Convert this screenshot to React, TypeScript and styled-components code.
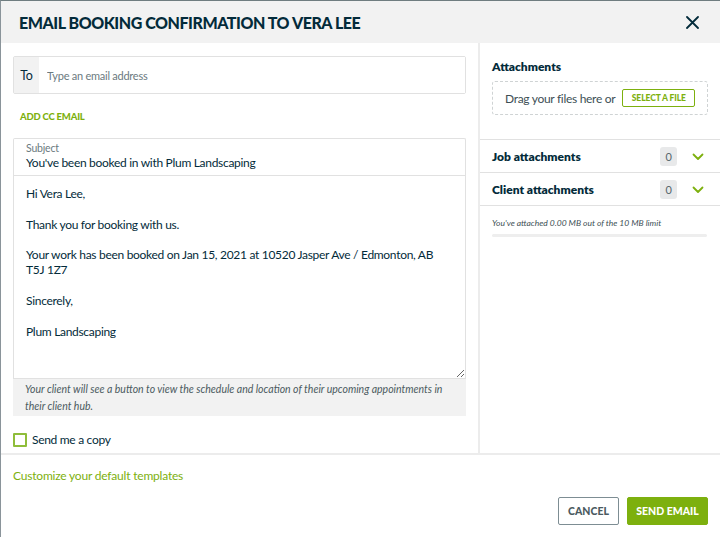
import React from "react";
import styled, { createGlobalStyle } from "styled-components";

const GlobalStyle = createGlobalStyle`
  html, body {
    margin: 0;
    padding: 0;
    background: #ffffff;
  }
  * {
    box-sizing: border-box;
  }
`;

const navy = "#032b3a";
const green = "#7db00e";
const border = "#e1e1e1";
const muted = "#f2f2f2";

const Modal = styled.div`
  width: 720px;
  height: 537px;
  display: flex;
  flex-direction: column;
  border-top: 1px solid #6f7d80;
  border-left: 1px solid #8a949a;
  font-family: Lato, "Open Sans", sans-serif;
  color: ${navy};
  background: #fff;
  overflow: hidden;
`;

const Header = styled.div`
  height: 42px;
  flex-shrink: 0;
  display: flex;
  align-items: center;
  justify-content: space-between;
  padding: 0 20px 0 18px;
  background: ${muted};
`;

const Title = styled.h1`
  margin: 0;
  font-size: 16px;
  font-weight: 900;
  letter-spacing: -0.45px;
  color: ${navy};
`;

const CloseButton = styled.button`
  border: none;
  background: none;
  padding: 0;
  width: 16px;
  height: 16px;
  display: flex;
  align-items: center;
  justify-content: center;
  color: ${navy};
  cursor: pointer;
`;

const Body = styled.div`
  height: 412px;
  display: flex;
  border-bottom: 2px solid #ececec;
`;

const LeftColumn = styled.div`
  width: 479px;
  flex-shrink: 0;
  padding: 13px 12px 0 12px;
  border-right: 2px solid #ececec;
  display: flex;
  flex-direction: column;
`;

const ToField = styled.div`
  height: 38px;
  display: flex;
  border: 1px solid ${border};
  border-radius: 2px;
`;

const ToLabel = styled.div`
  width: 25px;
  background: ${muted};
  display: flex;
  align-items: center;
  justify-content: center;
  font-size: 12.5px;
  letter-spacing: -0.2px;
  color: ${navy};
`;

const ToInput = styled.input`
  flex: 1;
  border: none;
  outline: none;
  padding: 0 8px;
  font-family: inherit;
  font-size: 11px;
  letter-spacing: -0.25px;
  color: ${navy};
  &::placeholder {
    color: #6b7a80;
  }
`;

const AddCc = styled.a`
  display: block;
  margin: 17px 0 0 7px;
  line-height: 12px;
  font-size: 9.5px;
  font-weight: 900;
  letter-spacing: -0.2px;
  color: ${green};
  text-transform: uppercase;
`;

const SubjectBox = styled.div`
  margin-top: 15px;
  height: 37px;
  padding: 3px 12px 0;
  border: 1px solid ${border};
  border-bottom: none;
  border-radius: 2px 2px 0 0;
`;

const SubjectLabel = styled.div`
  font-size: 10.5px;
  line-height: 13px;
  letter-spacing: -0.2px;
  color: #6b7a80;
`;

const SubjectValue = styled.div`
  font-size: 12px;
  line-height: 16px;
  letter-spacing: -0.3px;
  color: ${navy};
`;

const MessageArea = styled.textarea`
  height: 204px;
  width: 100%;
  display: block;
  margin: 0;
  padding: 10px 12px;
  border: 1px solid ${border};
  font-family: inherit;
  font-size: 12px;
  letter-spacing: -0.3px;
  line-height: 15.3px;
  color: ${navy};
  resize: vertical;
  outline: none;
`;

const Note = styled.div`
  height: 37px;
  padding: 2px 12px;
  background: ${muted};
  font-size: 10.5px;
  line-height: 17px;
  font-style: italic;
  color: #4b5a60;
`;

const CopyRow = styled.label`
  margin-top: 16px;
  display: flex;
  align-items: center;
  gap: 5px;
  font-size: 12px;
  letter-spacing: -0.3px;
  color: ${navy};
`;

const Checkbox = styled.span`
  width: 14px;
  height: 14px;
  border: 2px solid #8fbd3a;
  border-radius: 1px;
`;

const RightColumn = styled.div`
  flex: 1;
  display: flex;
  flex-direction: column;
`;

const AttachSection = styled.div`
  padding: 16px 12px 24px;
  border-bottom: 1px solid ${border};
`;

const SectionTitle = styled.div`
  font-size: 12px;
  font-weight: 800;
  line-height: 16px;
  color: ${navy};
`;

const DropZone = styled.div`
  margin-top: 6px;
  height: 34px;
  display: flex;
  align-items: center;
  gap: 7px;
  padding: 0 12px;
  border: 1px dashed #cfd3d4;
  border-radius: 3px;
  font-size: 12px;
  letter-spacing: -0.3px;
  white-space: nowrap;
  color: #3d4f55;
`;

const SelectButton = styled.button`
  height: 18px;
  width: 73px;
  padding: 0;
  border: 1px solid ${green};
  border-radius: 2px;
  background: #fff;
  font-family: inherit;
  font-size: 8.5px;
  font-weight: 900;
  letter-spacing: -0.1px;
  white-space: nowrap;
  color: ${green};
  text-transform: uppercase;
`;

const AccordionRow = styled.div`
  height: 33px;
  display: flex;
  align-items: center;
  padding: 1px 16px 0 12px;
  border-bottom: 1px solid ${border};
`;

const RowTitle = styled.div`
  flex: 1;
  font-size: 12px;
  font-weight: 800;
  color: ${navy};
`;

const CountBadge = styled.span`
  width: 17px;
  height: 19px;
  display: flex;
  align-items: center;
  justify-content: center;
  margin-right: 15px;
  border-radius: 3px;
  background: #e8e9ea;
  font-size: 11px;
  color: #55666c;
`;

const LimitNote = styled.div`
  padding: 11px 12px 0;
  font-size: 8.5px;
  line-height: 12px;
  font-style: italic;
  color: #3d4f55;
`;

const LimitBar = styled.div`
  margin: 5px 13px 0 12px;
  height: 3px;
  border-radius: 2px;
  background: #eeeeee;
`;

const Footer = styled.div`
  flex: 1;
  display: flex;
  flex-direction: column;
  padding: 13px 12px 0 12px;
`;

const TemplatesLink = styled.a`
  font-size: 12px;
  line-height: 16px;
  letter-spacing: -0.2px;
  color: ${green};
`;

const Actions = styled.div`
  margin-top: 13px;
  display: flex;
  justify-content: flex-end;
  gap: 8px;
`;

const Button = styled.button<{ $primary?: boolean }>`
  height: 28px;
  width: ${(p) => (p.$primary ? "81px" : "61px")};
  padding: 0;
  border-radius: 2px;
  border: 1px solid ${(p) => (p.$primary ? green : "#7d8d93")};
  background: ${(p) => (p.$primary ? green : "#fff")};
  color: ${(p) => (p.$primary ? "#fff" : "#4b5a60")};
  font-family: inherit;
  font-size: 10.5px;
  font-weight: 900;
  text-transform: uppercase;
`;

const Chevron = () => (
  <svg width="12" height="8" viewBox="0 0 12 8" fill="none">
    <path d="M1.5 1.5L6 6L10.5 1.5" stroke={green} strokeWidth="1.8" strokeLinecap="round" strokeLinejoin="round" />
  </svg>
);

const message = `Hi Vera Lee,

Thank you for booking with us.

Your work has been booked on Jan 15, 2021 at 10520 Jasper Ave / Edmonton, AB T5J 1Z7

Sincerely,

Plum Landscaping`;

export default function App() {
  return (
    <>
      <GlobalStyle />
      <Modal>
        <Header>
          <Title>EMAIL BOOKING CONFIRMATION TO VERA LEE</Title>
          <CloseButton aria-label="Close">
            <svg width="13" height="13" viewBox="0 0 13 13">
              <path d="M1 1L12 12M12 1L1 12" stroke={navy} strokeWidth="1.8" strokeLinecap="round" />
            </svg>
          </CloseButton>
        </Header>
        <Body>
          <LeftColumn>
            <ToField>
              <ToLabel>To</ToLabel>
              <ToInput placeholder="Type an email address" />
            </ToField>
            <AddCc>Add CC Email</AddCc>
            <SubjectBox>
              <SubjectLabel>Subject</SubjectLabel>
              <SubjectValue>You've been booked in with Plum Landscaping</SubjectValue>
            </SubjectBox>
            <MessageArea defaultValue={message} />
            <Note>
              Your client will see a button to view the schedule and location of their upcoming appointments in
              their client hub.
            </Note>
            <CopyRow>
              <Checkbox />
              Send me a copy
            </CopyRow>
          </LeftColumn>
          <RightColumn>
            <AttachSection>
              <SectionTitle>Attachments</SectionTitle>
              <DropZone>
                Drag your files here or
                <SelectButton>Select a file</SelectButton>
              </DropZone>
            </AttachSection>
            <AccordionRow>
              <RowTitle>Job attachments</RowTitle>
              <CountBadge>0</CountBadge>
              <Chevron />
            </AccordionRow>
            <AccordionRow>
              <RowTitle>Client attachments</RowTitle>
              <CountBadge>0</CountBadge>
              <Chevron />
            </AccordionRow>
            <LimitNote>You've attached 0.00 MB out of the 10 MB limit</LimitNote>
            <LimitBar />
          </RightColumn>
        </Body>
        <Footer>
          <TemplatesLink>Customize your default templates</TemplatesLink>
          <Actions>
            <Button>Cancel</Button>
            <Button $primary>Send Email</Button>
          </Actions>
        </Footer>
      </Modal>
    </>
  );
}
